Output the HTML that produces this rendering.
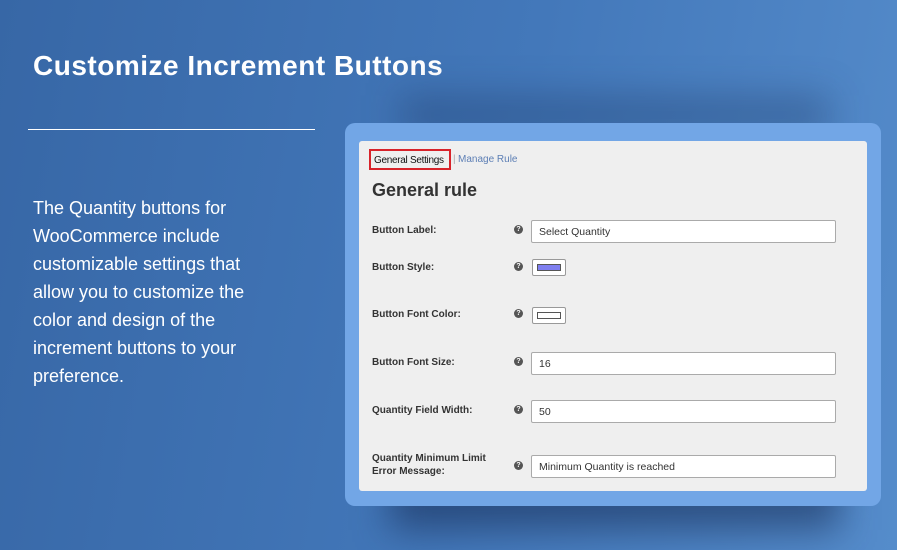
<!DOCTYPE html>
<html><head><style>
*{margin:0;padding:0;box-sizing:border-box}
body{width:897px;height:550px;overflow:hidden;position:relative;background:linear-gradient(100deg,#3767a6 0%,#4378ba 55%,#558ccb 100%);font-family:"Liberation Sans",sans-serif}
h1{position:absolute;left:33px;top:50px;color:#fff;font-size:28px;font-weight:bold;letter-spacing:0.5px;white-space:nowrap}
.line{position:absolute;left:28px;top:129px;width:287px;height:1px;background:#fff}
p{position:absolute;left:33px;top:194px;width:245px;color:#fff;font-size:18px;line-height:28px}
.shadow{position:absolute;left:390px;top:470px;width:450px;height:60px;background:rgba(20,40,80,.55);filter:blur(18px)}
.shadow2{position:absolute;left:400px;top:95px;width:430px;height:40px;background:rgba(20,40,80,.3);filter:blur(18px)}
.outer{position:absolute;left:345px;top:123px;width:536px;height:383px;background:#72a6e6;border-radius:10px}
.inner{position:absolute;left:359px;top:141px;width:508px;height:350px;background:#efefef;border-radius:3px}
.tab{position:absolute;left:369px;top:149px;width:82px;height:21px;border:2px solid #d8232a;font-size:10px;color:#111;padding:4px 0 0 3px;letter-spacing:-.3px}
.sep{position:absolute;left:453px;top:154px;font-size:10px;color:#aaa}
.mr{position:absolute;left:458px;top:154px;font-size:10px;color:#5d7fb5}
h2{position:absolute;left:372px;top:180px;font-size:18px;font-weight:bold;color:#333}
.lab{position:absolute;left:372px;font-size:10px;font-weight:bold;color:#333;line-height:13px}
.q{position:absolute;left:514px;width:9px;height:9px;border-radius:50%;background:#555;color:#fff;font-size:7px;font-weight:bold;text-align:center;line-height:9px}
.in{position:absolute;left:531px;width:305px;height:23px;background:#fff;border:1px solid #aaa;border-radius:2px;font-size:10.5px;color:#333;padding:5px 0 0 7px}
.sw{position:absolute;left:532px;width:34px;height:17px;background:#fff;border:1px solid #999;border-radius:2px}
.sw i{position:absolute;left:4px;top:4px;width:24px;height:7px;border:1px solid #555}
</style></head><body>
<h1>Customize Increment Buttons</h1>
<div class="line"></div>
<p>The Quantity buttons for WooCommerce include customizable settings that allow you to customize the color and design of the increment buttons to your preference.</p>
<div class="shadow2"></div><div class="shadow"></div>
<div class="outer"></div>
<div class="inner"></div>
<div class="tab">General Settings</div>
<div class="sep">|</div>
<div class="mr">Manage Rule</div>
<h2>General rule</h2>
<div class="lab" style="top:224px">Button Label:</div><div class="q" style="top:225px">?</div><div class="in" style="top:220px">Select Quantity</div>
<div class="lab" style="top:261px">Button Style:</div><div class="q" style="top:262px">?</div><div class="sw" style="top:259px"><i style="background:#7f7ff0"></i></div>
<div class="lab" style="top:308px">Button Font Color:</div><div class="q" style="top:309px">?</div><div class="sw" style="top:307px"><i style="background:#fff"></i></div>
<div class="lab" style="top:356px">Button Font Size:</div><div class="q" style="top:357px">?</div><div class="in" style="top:352px">16</div>
<div class="lab" style="top:404px">Quantity Field Width:</div><div class="q" style="top:405px">?</div><div class="in" style="top:400px">50</div>
<div class="lab" style="top:452px">Quantity Minimum Limit<br>Error Message:</div><div class="q" style="top:461px">?</div><div class="in" style="top:455px">Minimum Quantity is reached</div>
</body></html>
